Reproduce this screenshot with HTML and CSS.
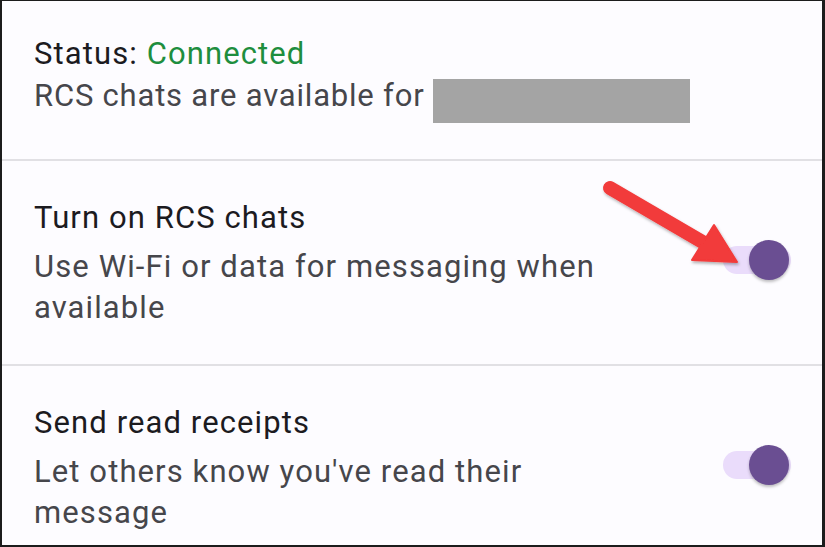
FILE: index.html
```html
<!DOCTYPE html>
<html lang="en">
<head>
<meta charset="utf-8">
<title>RCS chats</title>
<link rel="stylesheet" href="styles.css">
</head>
<body>
<div class="screen">
  <section class="row status">
    <div class="text">
      <div class="title">Status: <span class="ok">Connected</span></div>
      <div class="sub">RCS chats are available for<span class="redact"></span></div>
    </div>
  </section>
  <section class="row">
    <div class="text">
      <div class="title">Turn on RCS chats</div>
      <div class="sub">Use Wi-Fi or data for messaging when<br>available</div>
    </div>
    <div class="switch on"><span class="knob"></span></div>
  </section>
  <section class="row last">
    <div class="text">
      <div class="title">Send read receipts</div>
      <div class="sub">Let others know you've read their<br>message</div>
    </div>
    <div class="switch on"><span class="knob"></span></div>
  </section>

  <svg class="pointer" width="825" height="547" viewBox="0 0 825 547">
    <defs>
      <filter id="drop" x="-20%" y="-20%" width="140%" height="140%">
        <feDropShadow dx="1" dy="2" stdDeviation="1.5" flood-color="#000" flood-opacity="0.3"/>
      </filter>
    </defs>
    <g filter="url(#drop)" fill="#f23a3a" stroke="#f23a3a">
      <line x1="610" y1="188" x2="706" y2="244" stroke-width="14" stroke-linecap="round"/>
      <polygon points="737,262 714,225 692,260" stroke-width="2" stroke-linejoin="round"/>
    </g>
  </svg>
</div>
</body>
</html>
```

FILE: styles.css
```css
* { box-sizing: border-box; }

html, body {
  margin: 0;
  padding: 0;
  background: #fdfcff;
}

.screen {
  position: relative;
  width: 825px;
  height: 547px;
  overflow: hidden;
  background: #fdfcff;
  border-style: solid;
  border-color: #1c1c1c;
  border-width: 1px 3px 2px 2px;
  font-family: Roboto, "Noto Sans", sans-serif;
  font-size: 31px;
  letter-spacing: 1.1px;
}

.row {
  display: flex;
  align-items: center;
  padding: 36px 0 36px 32px;
  border-bottom: 2px solid #e1e0e4;
}

.row.status {
  padding-top: 32px;
  padding-bottom: 42px;
}

.row.last {
  border-bottom: none;
}

.text {
  flex: 1;
}

.title {
  color: #1c1b1f;
  line-height: 41px;
  margin-bottom: 8px;
}

.status .title {
  line-height: 42px;
  margin-bottom: 0;
}

.ok {
  color: #1e8e3e;
}

.sub {
  color: #46464b;
  line-height: 41px;
}

.status .sub {
  line-height: 42px;
  letter-spacing: 0.8px;
}

.redact {
  display: inline-block;
  width: 257px;
  height: 44px;
  background: #a4a4a4;
  vertical-align: top;
  margin: 4px 0 -6px 9px;
}

.switch {
  position: relative;
  width: 68px;
  height: 28px;
  margin-right: 31px;
  margin-top: -5px;
  border-radius: 14px;
  background: #eadcfb;
}

.knob {
  position: absolute;
  right: 2px;
  top: -6px;
  width: 40px;
  height: 40px;
  border-radius: 50%;
  background: #6a4e92;
  box-shadow: 0 2px 3px rgba(0, 0, 0, 0.25);
}

.pointer {
  position: absolute;
  left: -2px;
  top: -1px;
  pointer-events: none;
}
```
